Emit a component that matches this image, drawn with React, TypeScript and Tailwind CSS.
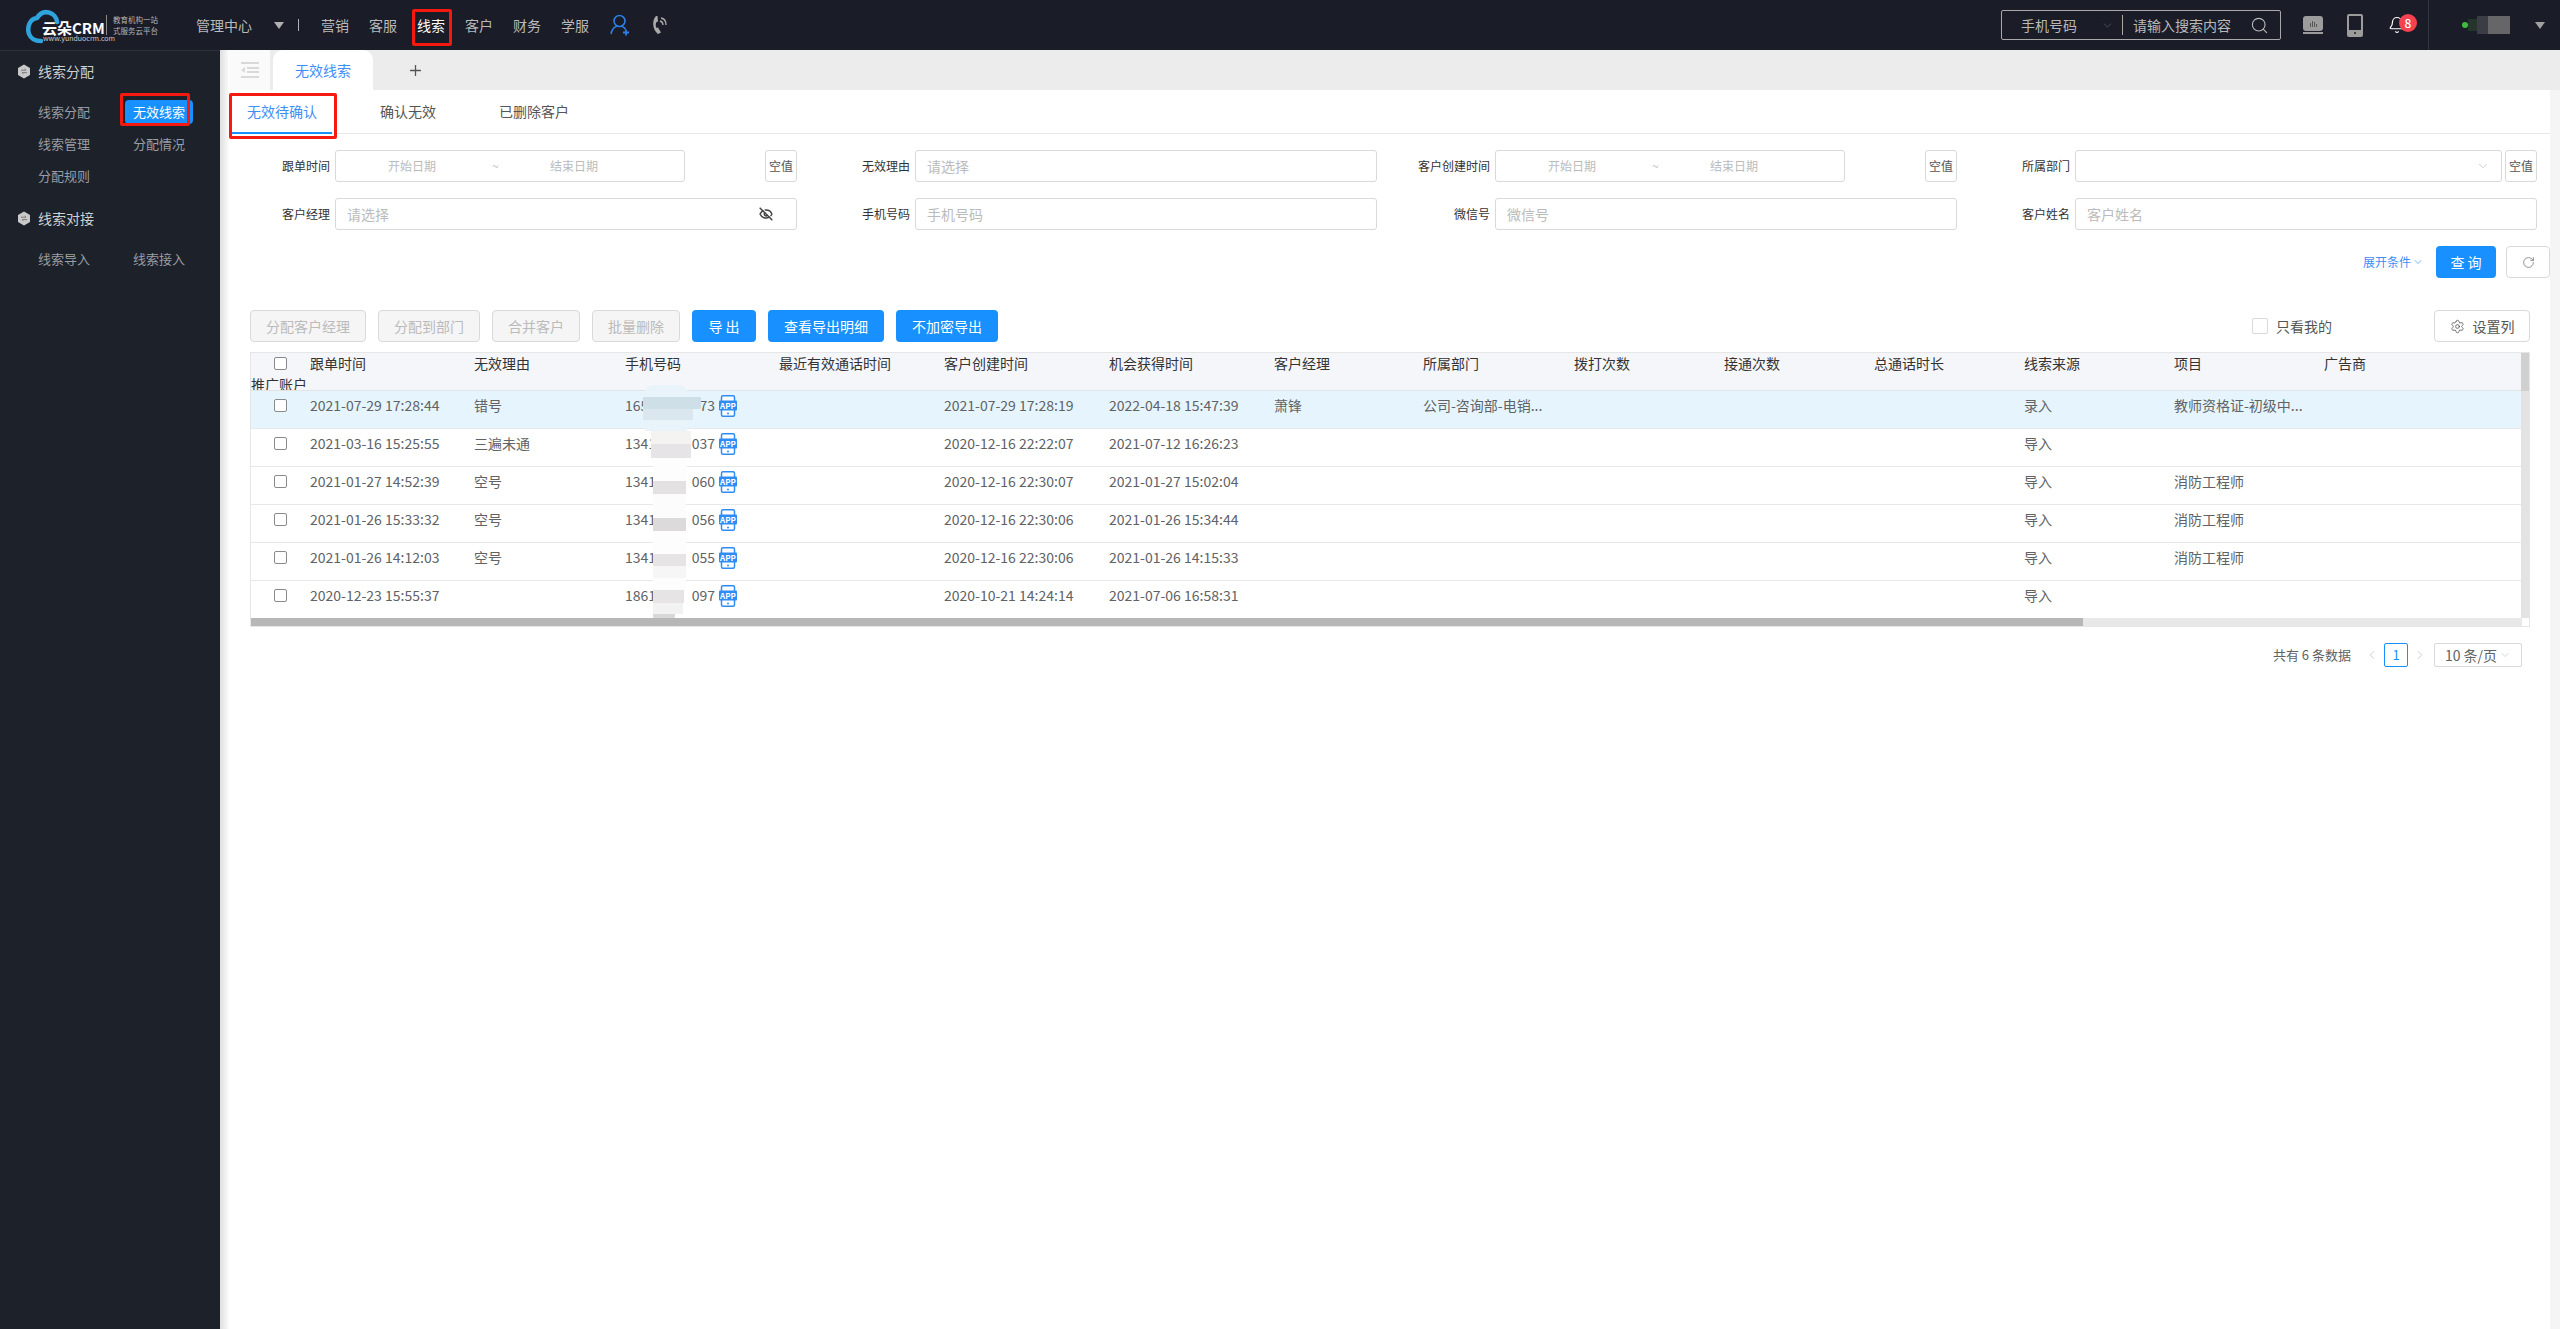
import { Bell, ChevronDown, ChevronLeft, ChevronRight, EyeOff, Plus, RotateCw, Search, Settings } from "lucide-react";

const cols =
  "grid grid-cols-[59px_164px_151px_154px_165px_165px_165px_149px_151px_150px_150px_150px_150px_150px_150px]";

const headers = [
  "跟单时间",
  "无效理由",
  "手机号码",
  "最近有效通话时间",
  "客户创建时间",
  "机会获得时间",
  "客户经理",
  "所属部门",
  "拨打次数",
  "接通次数",
  "总通话时长",
  "线索来源",
  "项目",
  "广告商",
  "推广账户",
];

const rows = [
  { t: "2021-07-29 17:28:44", why: "错号", tel: "165", tail: "73", c: "2021-07-29 17:28:19", o: "2022-04-18 15:47:39", m: "萧锋", d: "公司-咨询部-电销...", src: "录入", p: "教师资格证-初级中...", on: true },
  { t: "2021-03-16 15:25:55", why: "三遍未通", tel: "134", tail: "037", c: "2020-12-16 22:22:07", o: "2021-07-12 16:26:23", m: "", d: "", src: "导入", p: "" },
  { t: "2021-01-27 14:52:39", why: "空号", tel: "134", tail: "060", c: "2020-12-16 22:30:07", o: "2021-01-27 15:02:04", m: "", d: "", src: "导入", p: "消防工程师" },
  { t: "2021-01-26 15:33:32", why: "空号", tel: "134", tail: "056", c: "2020-12-16 22:30:06", o: "2021-01-26 15:34:44", m: "", d: "", src: "导入", p: "消防工程师" },
  { t: "2021-01-26 14:12:03", why: "空号", tel: "134", tail: "055", c: "2020-12-16 22:30:06", o: "2021-01-26 14:15:33", m: "", d: "", src: "导入", p: "消防工程师" },
  { t: "2020-12-23 15:55:37", why: "", tel: "186", tail: "097", c: "2020-10-21 14:24:14", o: "2021-07-06 16:58:31", m: "", d: "", src: "导入", p: "" },
];

function Hex() {
  return (
    <svg width="14" height="15" viewBox="0 0 14 15" className="shrink-0">
      <path d="M7 0.5 13 4v7l-6 3.5L1 11V4z" fill="#c9c9c9" />
      <path d="M4 6.2h5M9 6.2 7.6 5M10 8.6H5M5 8.6l1.4 1.2" stroke="#7d7d7d" strokeWidth="1" fill="none" />
    </svg>
  );
}

function Logo() {
  return (
    <div className="flex w-[196px] shrink-0 items-center pl-[25px]">
      <div className="relative h-[50px] w-[81px] shrink-0">
        <svg width="40" height="50" viewBox="0 0 40 50" className="absolute top-0 left-0">
          <path
            d="M32 22C31 12 18 8 12 18 4 19 2 28 4 34 6 39 11 41 16 41"
            fill="none"
            stroke="#2ea3dc"
            strokeWidth="4.5"
            strokeLinecap="round"
          />
        </svg>
        <div className="absolute top-[18px] left-[17px] text-[15px] leading-[20px] font-bold whitespace-nowrap text-white">
          云朵CRM
        </div>
        <div className="absolute top-[34px] left-[18px] text-[7px] leading-[9px] whitespace-nowrap text-[#c9c9c9]">
          www.yunduocrm.com
        </div>
      </div>
      <div className="h-[20px] w-px shrink-0 bg-[#8a8a8a]" />
      <div className="ml-[6px] text-[7.5px] leading-[11px] whitespace-nowrap text-[#b5b5b5]">
        <div>教育机构一站</div>
        <div>式服务云平台</div>
      </div>
    </div>
  );
}

function TopBar() {
  return (
    <div className="flex h-[50px] shrink-0 items-center bg-[#1a1c28] text-[14px] text-[#b9b9b9]">
      <Logo />
      <span>管理中心</span>
      <svg width="10" height="7" viewBox="0 0 10 7" className="ml-[22px]">
        <path d="M0 0h10L5 7z" fill="#b0b0b0" />
      </svg>
      <div className="ml-[14px] h-[12px] w-px bg-[#b0b0b0]" />
      <div className="ml-[22px] flex gap-[20px]">
        <span>营销</span>
        <span>客服</span>
        <span className="relative text-white">
          线索
          <span className="absolute top-[-6px] left-[-5px] h-[37px] w-[40px] rounded-[2px] border-[3px] border-[#f5190f]" />
        </span>
        <span>客户</span>
        <span>财务</span>
        <span>学服</span>
      </div>
      <svg width="20" height="22" viewBox="0 0 20 22" className="ml-[21px]" fill="none" stroke="#2c7fe6" strokeWidth="1.6">
        <circle cx="9.5" cy="7" r="5.5" />
        <path d="M1 20c1-5 4-7.5 6.5-8M12 12.5c1.5.5 3 1.5 3.5 3" />
        <path d="M13 18.5h6M16 15.5v6" strokeWidth="1.8" />
      </svg>
      <svg width="20" height="22" viewBox="0 0 20 22" className="ml-[20px]" fill="none">
        <path d="M6 2C2 6 2 15 8 20l3-1.5-3-5-1.5.5c-1-2-1-4 0-6L8 7.5 7.5 2z" fill="#a9a9a9" />
        <path d="M10 7c2 .5 3 2 3 4M11 4c3 .5 5 3 5 7" stroke="#a9a9a9" strokeWidth="1.3" />
      </svg>

      <div className="ml-auto flex h-[30px] w-[280px] items-center rounded-[2px] border border-[#a8a8a8] pl-[19px]">
        <span className="w-[80px]">手机号码</span>
        <ChevronDown size={13} strokeWidth={1} className="text-[#777]" />
        <div className="ml-[8px] h-[20px] w-px bg-[#a8a8a8]" />
        <span className="ml-[10px]">请输入搜索内容</span>
        <Search size={19} strokeWidth={1.4} className="ml-[19px] text-[#b9b9b9]" />
      </div>
      <div className="ml-[22px] flex w-[20px] flex-col gap-[1px]">
        <div className="flex h-[15px] items-end justify-center gap-[1px] rounded-[3px] bg-[#9c9c9c] pb-[4px]">
          <div className="h-[4px] w-[1px] bg-[#555]" />
          <div className="h-[6px] w-[1px] bg-[#555]" />
          <div className="h-[5px] w-[1px] bg-[#555]" />
          <div className="h-[3px] w-[1px] bg-[#555]" />
        </div>
        <div className="h-[2px] bg-[#9c9c9c]" />
      </div>
      <div className="ml-[24px] flex h-[23px] w-[16px] flex-col items-center rounded-[2px] bg-[#9c9c9c] px-[2px] pt-[2px]">
        <div className="h-[14px] w-full bg-[#1a1c28]" />
        <div className="mt-[2px] size-[2px] rounded-full bg-[#222]" />
      </div>
      <div className="relative ml-[25px] h-[26px] w-[18px]">
        <Bell size={18} strokeWidth={1.6} className="absolute top-[13px] left-0 -translate-y-1/2 text-white" />
        <span className="absolute top-[2px] left-[11px] flex size-[18px] items-center justify-center rounded-full bg-[#f5424f] text-[12px] leading-none font-medium text-white">
          8
        </span>
      </div>
      <div className="ml-[22px] h-[50px] w-px bg-[#33353f]" />
      <div className="ml-[33px] flex h-[19px] w-[48px] items-center">
        <div className="size-[6px] rounded-full bg-[#42b93f]" />
        <div className="h-[12px] w-[10px] bg-[#26352c]" />
        <div className="h-[18px] w-[12px] bg-[#3b3c45]" />
        <div className="h-[18px] w-[24px] bg-[#666669]" />
      </div>
      <svg width="10" height="7" viewBox="0 0 10 7" className="mr-[15px] ml-[25px]">
        <path d="M0 0h10L5 7z" fill="#a0a0a0" />
      </svg>
    </div>
  );
}

function SideItem({ label, active }: { label: string; active?: boolean }) {
  if (active) {
    return (
      <div className="relative flex h-[24px] w-[68px] items-center rounded-[4px] bg-[#1890ff] pl-[8px] text-white">
        {label}
        <span className="absolute top-[-7px] left-[-5px] h-[33px] w-[70px] rounded-[2px] border-[3px] border-[#f5190f]" />
      </div>
    );
  }
  return <div className="flex h-[24px] items-center pl-[8px]">{label}</div>;
}

function SideBar() {
  return (
    <div className="w-[220px] shrink-0 border-t border-[#2d323a] bg-[#1c212a] text-[13px] text-[#9a9da3]">
      <div className="mt-[13px] flex h-[14px] items-center gap-[7px] pl-[17px] text-[14px] text-[#cfcfcf]">
        <Hex />
        线索分配
      </div>
      <div className="mt-[22px] grid grid-cols-[87px_1fr] gap-y-[8px] pl-[38px]">
        <div className="flex h-[24px] items-center">线索分配</div>
        <SideItem label="无效线索" active />
        <div className="flex h-[24px] items-center">线索管理</div>
        <SideItem label="分配情况" />
        <div className="flex h-[24px] items-center">分配规则</div>
      </div>
      <div className="mt-[23px] flex h-[14px] items-center gap-[7px] pl-[17px] text-[14px] text-[#cfcfcf]">
        <Hex />
        线索对接
      </div>
      <div className="mt-[22px] grid grid-cols-[87px_1fr] pl-[38px]">
        <div className="flex h-[24px] items-center">线索导入</div>
        <SideItem label="线索接入" />
      </div>
    </div>
  );
}

function Blank({ label = "空值" }: { label?: string }) {
  return (
    <div className="flex h-[32px] w-[32px] shrink-0 items-center justify-center rounded-[3px] border border-[#d9d9d9] text-[12px] text-[#555]">
      {label}
    </div>
  );
}

function DateRange() {
  return (
    <div className="flex h-[32px] w-[350px] items-center rounded-[3px] border border-[#d9d9d9] pl-[52px] text-[12px] text-[#bbb]">
      <span>开始日期</span>
      <span className="ml-[56px] w-[7px]">~</span>
      <span className="ml-[51px]">结束日期</span>
    </div>
  );
}

function TextBox({ placeholder, eye }: { placeholder: string; eye?: boolean }) {
  return (
    <div className="flex h-[32px] w-[462px] items-center justify-between rounded-[3px] border border-[#d9d9d9] px-[11px] text-[14px] text-[#bbb]">
      <span>{placeholder}</span>
      {eye && <EyeOff size={14} strokeWidth={2.6} className="mr-[12px] text-[#444]" />}
    </div>
  );
}

function Field({ label, children }: { label: string; children: React.ReactNode }) {
  return (
    <div className="flex items-center">
      <div className="mr-[5px] w-[100px] text-right text-[12px] whitespace-nowrap text-[#333]">{label}</div>
      {children}
    </div>
  );
}

function Filters() {
  return (
    <div className="mt-[16px] grid grid-cols-[repeat(4,580px)] gap-y-[16px]">
      <Field label="跟单时间">
        <DateRange />
        <div className="ml-[80px]">
          <Blank />
        </div>
      </Field>
      <Field label="无效理由">
        <TextBox placeholder="请选择" />
      </Field>
      <Field label="客户创建时间">
        <DateRange />
        <div className="ml-[80px]">
          <Blank />
        </div>
      </Field>
      <Field label="所属部门">
        <div className="flex h-[32px] w-[427px] items-center justify-end rounded-[3px] border border-[#d9d9d9] pr-[11px]">
          <ChevronDown size={14} strokeWidth={1} className="text-[#aaa]" />
        </div>
        <div className="ml-[3px]">
          <Blank />
        </div>
      </Field>
      <Field label="客户经理">
        <TextBox placeholder="请选择" eye />
      </Field>
      <Field label="手机号码">
        <TextBox placeholder="手机号码" />
      </Field>
      <Field label="微信号">
        <TextBox placeholder="微信号" />
      </Field>
      <Field label="客户姓名">
        <TextBox placeholder="客户姓名" />
      </Field>
    </div>
  );
}

function GrayBtn({ label, w }: { label: string; w: string }) {
  return (
    <button type="button" className={`h-[32px] rounded-[4px] border border-[#d9d9d9] bg-[#f5f5f5] text-[14px] text-[#bbb] ${w}`}>
      {label}
    </button>
  );
}

function BlueBtn({ label, w }: { label: string; w: string }) {
  return (
    <button type="button" className={`h-[32px] rounded-[4px] bg-[#1890ff] text-[14px] text-white ${w}`}>
      {label}
    </button>
  );
}

function Check() {
  return <div className="size-[13px] rounded-[2px] border border-[#8a8a8a] bg-white" />;
}

function AppIcon() {
  return (
    <svg width="18" height="22" viewBox="0 0 18 22" className="ml-[4px] shrink-0">
      <rect x="2.5" y="0.8" width="13" height="20.4" rx="1.5" fill="#fff" stroke="#2f8cf5" strokeWidth="1.5" />
      <rect x="0" y="5.5" width="18" height="10" rx="1" fill="#2f8cf5" />
      <text x="9" y="13.5" textAnchor="middle" fontSize="8" fontWeight="700" fill="#fff">
        APP
      </text>
      <circle cx="9" cy="18.6" r="1" fill="#2f8cf5" />
    </svg>
  );
}

function Smear() {
  return (
    <div className="absolute top-[32px] left-[392px] flex h-[241px] w-[60px] flex-col">
      <div className="h-[12px] w-[46px] rounded-t-[16px] bg-[#e8f3fa]" />
      <div className="h-[12px] w-[58px] bg-[#cfdfe8]" />
      <div className="h-[11px] w-[50px] bg-[#dae7ee]" />
      <div className="ml-[2px] h-[11px] w-[42px] bg-[#e9f4fa]" />
      <div className="ml-[8px] h-[13px] w-[40px] bg-[#f4f3f1]" />
      <div className="ml-[8px] h-[14px] w-[40px] bg-[#e6e4e6]" />
      <div className="ml-[10px] h-[23px] w-[34px] bg-[#fdfdfd]" />
      <div className="ml-[10px] h-[13px] w-[33px] bg-[#e3e1e1]" />
      <div className="ml-[10px] h-[24px] w-[33px] bg-[#fcfcfc]" />
      <div className="ml-[10px] h-[13px] w-[33px] bg-[#dcdadb]" />
      <div className="ml-[10px] h-[23px] w-[33px] bg-[#fdfdfd]" />
      <div className="ml-[10px] h-[12px] w-[33px] bg-[#e6e4e5]" />
      <div className="ml-[10px] h-[12px] w-[33px] bg-[#f6f6f6]" />
      <div className="ml-[10px] h-[12px] w-[33px] bg-[#fdfdfd]" />
      <div className="ml-[10px] h-[13px] w-[31px] bg-[#e6e4e5]" />
      <div className="ml-[10px] h-[11px] w-[30px] bg-[#f2f2f2]" />
      <div className="ml-[10px] h-[12px] w-[22px] rounded-b-[10px] bg-[#d7d8d8]" />
    </div>
  );
}

function DataTable() {
  return (
    <div className="relative mx-[20px] mt-[10px] h-[275px] overflow-hidden border border-[#e6e6e6] bg-white">
      <div className="flex h-[38px] w-[2271px] overflow-hidden border-b border-[#e3e3e3] bg-[#f5f6fa]">
        <div className={`${cols} shrink-0 items-center text-[14px] whitespace-nowrap text-[#333]`}>
          <div className="flex justify-center pr-[1px]">
            <Check />
          </div>
          {headers.map((h) => (
            <div key={h}>{h}</div>
          ))}
        </div>
      </div>
      {rows.map((r) => (
        <div
          key={r.t}
          className={`h-[38px] w-[2271px] overflow-hidden border-b border-[#e8e8e8] ${r.on ? "bg-[#e6f5fd]" : "bg-white"}`}
        >
          <div className={`${cols} h-full items-center text-[14px] whitespace-nowrap text-[#606266]`}>
            <div className="flex justify-center pr-[1px]">
              <Check />
            </div>
            <div>{r.t}</div>
            <div>{r.why}</div>
            <div className="flex items-center">
              <span className="w-[90px] text-right">
                <span className="float-left">{r.tel}1</span>
                {r.tail}
              </span>
              <AppIcon />
            </div>
            <div />
            <div>{r.c}</div>
            <div>{r.o}</div>
            <div>{r.m}</div>
            <div>{r.d}</div>
            <div />
            <div />
            <div />
            <div>{r.src}</div>
            <div>{r.p}</div>
            <div />
            <div />
          </div>
        </div>
      ))}
      <Smear />
      <div className="absolute bottom-0 left-0 h-[8px] w-[2271px] bg-[#e8e8e8]">
        <div className="h-full w-[1832px] bg-[#b7b7b7]" />
      </div>
      <div className="absolute top-0 right-0 bottom-[8px] w-[8px] bg-[#e3e3e3]">
        <div className="h-[38px] bg-[#d0d0d0]" />
      </div>
    </div>
  );
}

export default function App() {
  return (
    <div className="flex h-[1329px] flex-col overflow-hidden bg-white font-['Noto_Sans_CJK_SC','Liberation_Sans',sans-serif]">
      <TopBar />
      <div className="flex min-h-0 flex-1">
        <SideBar />
        <div className="w-[10px] shrink-0 bg-gradient-to-r from-[#dedede] to-white" />
        <div className="flex min-w-0 flex-1 flex-col">
          <div className="flex h-[40px] shrink-0 items-stretch bg-[#ececec]">
            <div className="flex w-[40px] items-center justify-center bg-[#fafafa]">
              <svg width="18" height="16" viewBox="0 0 18 16" fill="#d9d9d9">
                <rect width="18" height="2" />
                <rect x="6" y="5" width="12" height="2" />
                <rect x="6" y="9" width="12" height="2" />
                <rect y="14" width="18" height="2" />
                <path d="M4 5v6L0 8z" />
              </svg>
            </div>
            <div className="ml-[3px] flex w-[100px] items-center justify-center rounded-t-[10px] bg-white text-[14px] text-[#3f8ef5]">
              无效线索
            </div>
            <Plus size={17} strokeWidth={1.8} className="mt-[12px] ml-[34px] text-[#555]" />
          </div>
          <div className="flex min-h-0 flex-1">
            <div className="flex-1">
              <div className="flex h-[44px] gap-[26px] border-b border-[#e8e8e8] pl-[2px] text-[14px] text-[#555]">
                <div className="relative flex h-[44px] w-[100px] items-center justify-center border-b-[2px] border-[#1890ff] text-[#3f8ef5]">
                  无效待确认
                  <span className="absolute top-[3px] left-[-3px] h-[46px] w-[108px] rounded-[2px] border-[3px] border-[#f5190f]" />
                </div>
                <div className="flex w-[100px] items-center justify-center">确认无效</div>
                <div className="flex w-[100px] items-center justify-center">已删除客户</div>
              </div>
              <Filters />
              <div className="mt-[16px] flex h-[32px] items-center justify-end">
                <span className="flex items-center text-[12px] text-[#3f8ef5]">
                  展开条件
                  <ChevronDown size={12} strokeWidth={1.3} className="ml-[1px]" />
                </span>
                <button type="button" className="ml-[12px] h-[32px] w-[60px] rounded-[4px] bg-[#1890ff] text-[14px] text-white">
                  查 询
                </button>
                <div className="ml-[10px] flex h-[32px] w-[44px] items-center justify-center rounded-[4px] border border-[#d9d9d9]">
                  <RotateCw size={13} strokeWidth={1.3} className="text-[#666]" />
                </div>
              </div>
              <div className="mt-[32px] flex h-[32px] items-center gap-[12px] pr-[20px] pl-[20px]">
                <GrayBtn label="分配客户经理" w="w-[116px]" />
                <GrayBtn label="分配到部门" w="w-[102px]" />
                <GrayBtn label="合并客户" w="w-[88px]" />
                <GrayBtn label="批量删除" w="w-[88px]" />
                <BlueBtn label="导 出" w="w-[64px]" />
                <BlueBtn label="查看导出明细" w="w-[116px]" />
                <BlueBtn label="不加密导出" w="w-[102px]" />
                <div className="ml-auto flex items-center">
                  <div className="size-[16px] rounded-[2px] border border-[#d9d9d9]" />
                  <span className="ml-[8px] text-[14px] text-[#555]">只看我的</span>
                </div>
                <div className="ml-[90px] flex h-[32px] w-[96px] items-center justify-center gap-[8px] rounded-[4px] border border-[#d9d9d9] text-[14px] text-[#555]">
                  <Settings size={15} strokeWidth={1.3} />
                  设置列
                </div>
              </div>
              <DataTable />
              <div className="mt-[16px] flex h-[24px] items-center justify-end pr-[28px] text-[13px] text-[#606266]">
                <span>共有 6 条数据</span>
                <ChevronLeft size={14} strokeWidth={1.2} className="ml-[14px] text-[#bbb]" />
                <div className="ml-[5px] flex h-[24px] w-[24px] items-center justify-center rounded-[2px] border border-[#1890ff] text-[#1890ff]">
                  1
                </div>
                <ChevronRight size={14} strokeWidth={1.2} className="ml-[5px] text-[#bbb]" />
                <div className="ml-[7px] flex h-[24px] w-[88px] items-center justify-center rounded-[2px] border border-[#d9d9d9] text-[14px]">
                  10 条/页
                  <ChevronDown size={12} strokeWidth={1} className="ml-[2px] text-[#aaa]" />
                </div>
              </div>
            </div>
            <div className="w-[10px] shrink-0 bg-[#f5f5f5]" />
          </div>
        </div>
      </div>
    </div>
  );
}
